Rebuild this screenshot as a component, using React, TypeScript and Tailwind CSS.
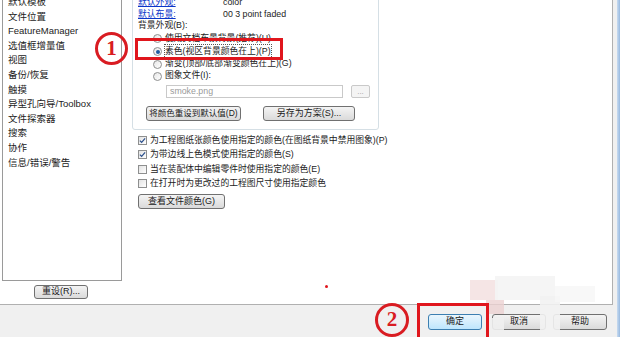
import type { ReactNode } from "react";

const FONT = "font-['Liberation_Sans','Noto_Sans_CJK_SC',sans-serif]";

const MENU = [
  "默认模板",
  "文件位置",
  "FeatureManager",
  "选值框增量值",
  "视图",
  "备份/恢复",
  "触摸",
  "异型孔向导/Toolbox",
  "文件探索器",
  "搜索",
  "协作",
  "信息/错误/警告",
];

function WinButton({
  children,
  className = "",
  primary = false,
}: {
  children: ReactNode;
  className?: string;
  primary?: boolean;
}) {
  return (
    <div
      className={`flex items-center justify-center whitespace-nowrap rounded-[3px] border text-[#1a1a1a] ${
        primary
          ? "border-[#3c7fb1] bg-gradient-to-b from-[#eaf6fd] to-[#bee6fd]"
          : "border-[#707070] bg-gradient-to-b from-[#f4f4f4] to-[#dadada]"
      } ${className}`}
    >
      {children}
    </div>
  );
}

function Radio({ checked = false }: { checked?: boolean }) {
  return (
    <span className="flex size-[9px] shrink-0 items-center justify-center rounded-full border border-[#8e8f8f] bg-gradient-to-br from-[#e6e6e6] to-white">
      {checked && <span className="size-[4px] rounded-full bg-[#1e5aa0]" />}
    </span>
  );
}

function Check({ checked = false }: { checked?: boolean }) {
  return (
    <span className="flex size-[9px] shrink-0 items-center justify-center border border-[#8e8f8f] bg-gradient-to-br from-[#e2e2e2] to-white">
      {checked && (
        <svg viewBox="0 0 8 8" className="size-[7px]">
          <path d="M1 4.2 3 6.2 7 1.5" fill="none" stroke="#2a4f8c" strokeWidth="1.4" />
        </svg>
      )}
    </span>
  );
}

export default function App() {
  return (
    <div className={`relative flex h-[337px] w-[620px] overflow-hidden bg-[#f0f0f0] ${FONT}`}>
      <div className="flex w-[617px] flex-col">
        {/* main white panel */}
        <div className="flex h-[305px] w-[613px] border-r border-b border-[#b0b0b0] bg-white">
          {/* left tree list */}
          <div className="flex w-[132px] flex-col">
            <div className="-mt-[10px] ml-[2px] h-[291px] w-[120px] border border-[#9a9a9a] bg-white pl-[5px] pt-[4px]">
              {MENU.map((m) => (
                <div key={m} className="h-[14.6px] text-[9.5px] leading-[14.6px] text-[#222]">
                  {m}
                </div>
              ))}
            </div>
            <WinButton className="ml-[34px] mt-[4px] h-[14px] w-[54px] text-[9px]">重设(R)...</WinButton>
          </div>

          {/* right options */}
          <div className="flex flex-col text-[8.8px] text-[#222]">
            <div className="-mt-[10px] flex h-[140px] w-[247px] flex-col rounded-[3px] border border-[#d5dfe5] pt-[6px]">
              <div className="flex h-[12px] items-center pl-[5px]">
                <span className="w-[85px] text-[#0b35c9] underline">默认外观:</span>
                <span>color</span>
              </div>
              <div className="flex h-[11px] items-center pl-[5px]">
                <span className="w-[85px] text-[#0b35c9] underline">默认布景:</span>
                <span>00 3 point faded</span>
              </div>
              <div className="flex h-[12px] items-center pl-[5px]">背景外观(B):</div>
              <div className="flex h-[13px] items-center gap-[3px] pl-[20px]">
                <Radio />
                <span>使用文档布景背景(推荐)(U)</span>
              </div>
              <div className="flex h-[13px] items-center gap-[3px] pl-[20px]">
                <Radio checked />
                <span className="outline outline-1 outline-dotted outline-[#555]">素色(视区背景颜色在上)(P)</span>
              </div>
              <div className="flex h-[12px] items-center gap-[3px] pl-[20px]">
                <Radio />
                <span>渐变(顶部/底部渐变颜色在上)(G)</span>
              </div>
              <div className="flex h-[12px] items-center gap-[3px] pl-[20px]">
                <Radio />
                <span>图象文件(I):</span>
              </div>
              <div className="mt-[3px] flex h-[13px] items-center">
                <div className="ml-[33px] flex h-[13px] w-[177px] items-center border border-[#c9c9c9] bg-white pl-[3px] text-[#9a9a9a]">
                  smoke.png
                </div>
                <div className="ml-[8px] flex h-[13px] w-[19px] items-center justify-center rounded-[2px] border border-[#c9c9c9] bg-[#f4f4f4] text-[8px] text-[#a0a0a0]">
                  ...
                </div>
              </div>
              <div className="mt-[8px] flex h-[15px]">
                <WinButton className="ml-[13px] h-[15px] w-[95px] text-[8.5px]">将颜色重设到默认值(D)</WinButton>
                <WinButton className="ml-[22px] h-[15px] w-[92px] text-[9px]">另存为方案(S)...</WinButton>
              </div>
            </div>

            <div className="mt-[3px] flex flex-col pl-[6px]">
              <div className="flex h-[14.5px] items-center gap-[3px]">
                <Check checked />
                <span>为工程图纸张颜色使用指定的颜色(在图纸背景中禁用图象)(P)</span>
              </div>
              <div className="flex h-[14.5px] items-center gap-[3px]">
                <Check checked />
                <span>为带边线上色模式使用指定的颜色(S)</span>
              </div>
              <div className="flex h-[14.5px] items-center gap-[3px]">
                <Check />
                <span>当在装配体中编辑零件时使用指定的颜色(E)</span>
              </div>
              <div className="flex h-[14.5px] items-center gap-[3px]">
                <Check />
                <span>在打开时为更改过的工程图尺寸使用指定颜色</span>
              </div>
              <WinButton className="mt-[3px] h-[15px] w-[87px] text-[9px]">查看文件颜色(G)</WinButton>
            </div>
          </div>
        </div>

        {/* bottom dialog buttons */}
        <div className="flex h-[32px] items-center pl-[428px] pt-[2px]">
          <WinButton primary className="h-[16px] w-[54px] text-[9px]">确定</WinButton>
          <WinButton className="ml-[10px] h-[16px] w-[54px] text-[9px]">取消</WinButton>
          <WinButton className="ml-[7px] h-[16px] w-[54px] text-[9px]">帮助</WinButton>
        </div>
      </div>
      <div className="w-[3px] bg-gradient-to-r from-[#c8dbf0] to-[#98b9df]" />

      {/* watermark mosaic */}
      <div className="absolute left-[470px] top-[280px] h-[20px] w-[28px] bg-[#f3dede]/80" />
      <div className="absolute left-[495px] top-[276px] h-[24px] w-[60px] bg-[#f4f4f4]/90" />
      <div className="absolute left-[486px] top-[300px] h-[14px] w-[18px] bg-[#ecd2d2]/80" />
      <div className="absolute left-[540px] top-[296px] h-[41px] w-[20px] bg-[#f2f2f2]/90" />
      <div className="absolute left-[555px] top-[286px] h-[16px] w-[40px] bg-[#f6f6f6]/80" />
      <div className="absolute left-[490px] top-[318px] h-[16px] w-[14px] bg-[#f0f0f0]/90" />

      {/* annotations */}
      <div className="absolute left-[135px] top-[38px] h-[22px] w-[148px] border-[3px] border-[#e0161d]" />
      <div className="absolute left-[417px] top-[303px] h-[40px] w-[72px] border-[3px] border-[#e0161d]" />
      <div className="absolute left-[95px] top-[32px] flex size-[33px] items-center justify-center rounded-full border-[3px] border-[#d91c22] font-['Liberation_Serif',serif] text-[21px] font-bold text-[#d91c22]">
        1
      </div>
      <div className="absolute left-[375px] top-[303px] flex size-[34px] items-center justify-center rounded-full border-[3px] border-[#d91c22] font-['Liberation_Serif',serif] text-[21px] font-bold text-[#d91c22]">
        2
      </div>
      <div className="absolute left-[325px] top-[285px] size-[3px] rounded-full bg-[#e0161d]" />
    </div>
  );
}
